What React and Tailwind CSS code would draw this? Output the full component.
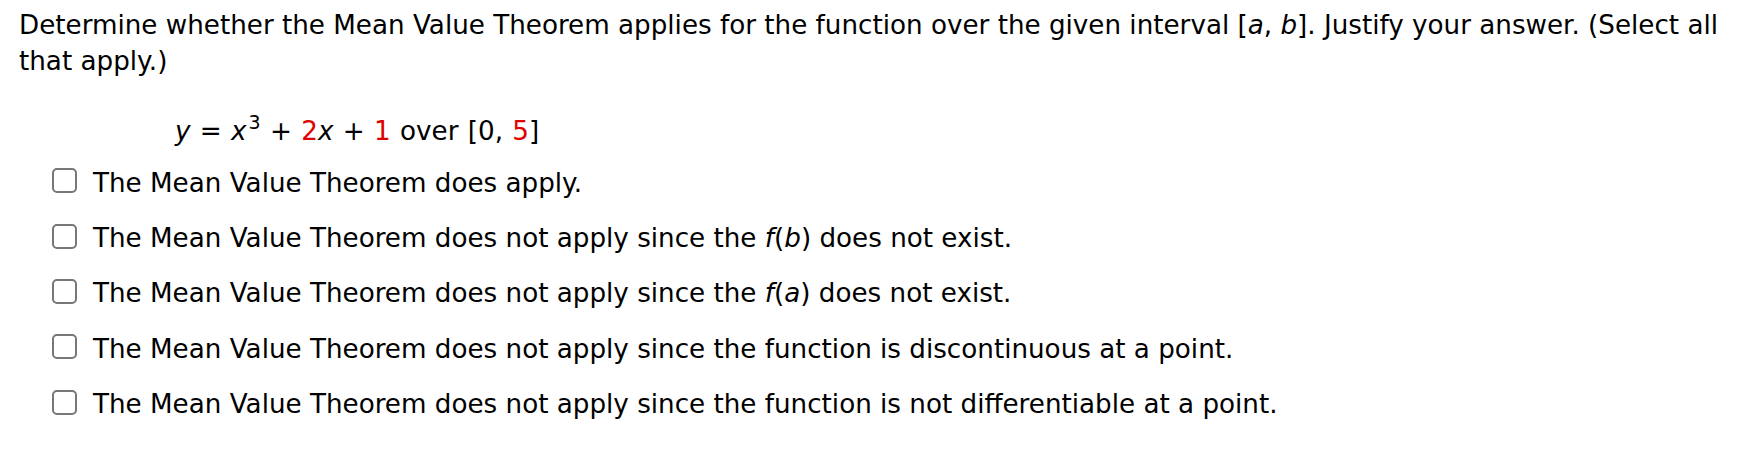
import React from "react";

const options = [
  <>The Mean Value Theorem does apply.</>,
  <>The Mean Value Theorem does not apply since the <i>f</i>(<i>b</i>) does not exist.</>,
  <>The Mean Value Theorem does not apply since the <i>f</i>(<i>a</i>) does not exist.</>,
  <>The Mean Value Theorem does not apply since the function is discontinuous at a point.</>,
  <>The Mean Value Theorem does not apply since the function is not differentiable at a point.</>,
];

export default function App() {
  return (
    <div className="w-[1748px] h-[462px] bg-white text-black font-['DejaVu_Sans',sans-serif] text-[26.2px] leading-[36px] pl-[19px] pt-[6.9px]">
      <p>
        Determine whether the Mean Value Theorem applies for the function over the given interval [<i>a</i>, <i>b</i>]. Justify your answer. (Select all
        <br />
        that apply.)
      </p>
      <div className="mt-[34px] pl-[156px] [word-spacing:1px]">
        <i>y</i> = <i>x</i>
        <sup className="ml-[2px] text-[19px] top-[-0.6em]">3</sup> + <span className="text-[#e00000]">2</span>
        <i>x</i> + <span className="text-[#e00000]">1</span> over [0, <span className="text-[#e00000]">5</span>]
      </div>
      <div className="mt-[16px] flex flex-col gap-[19.3px] pl-[33px]">
        {options.map((o, i) => (
          <label key={i} className="flex items-start gap-[16px]">
            <span className="mt-[3.5px] w-[25px] h-[25px] shrink-0 rounded-[5px] border-2 border-[#777777] bg-white" />
            <span>{o}</span>
          </label>
        ))}
      </div>
    </div>
  );
}
